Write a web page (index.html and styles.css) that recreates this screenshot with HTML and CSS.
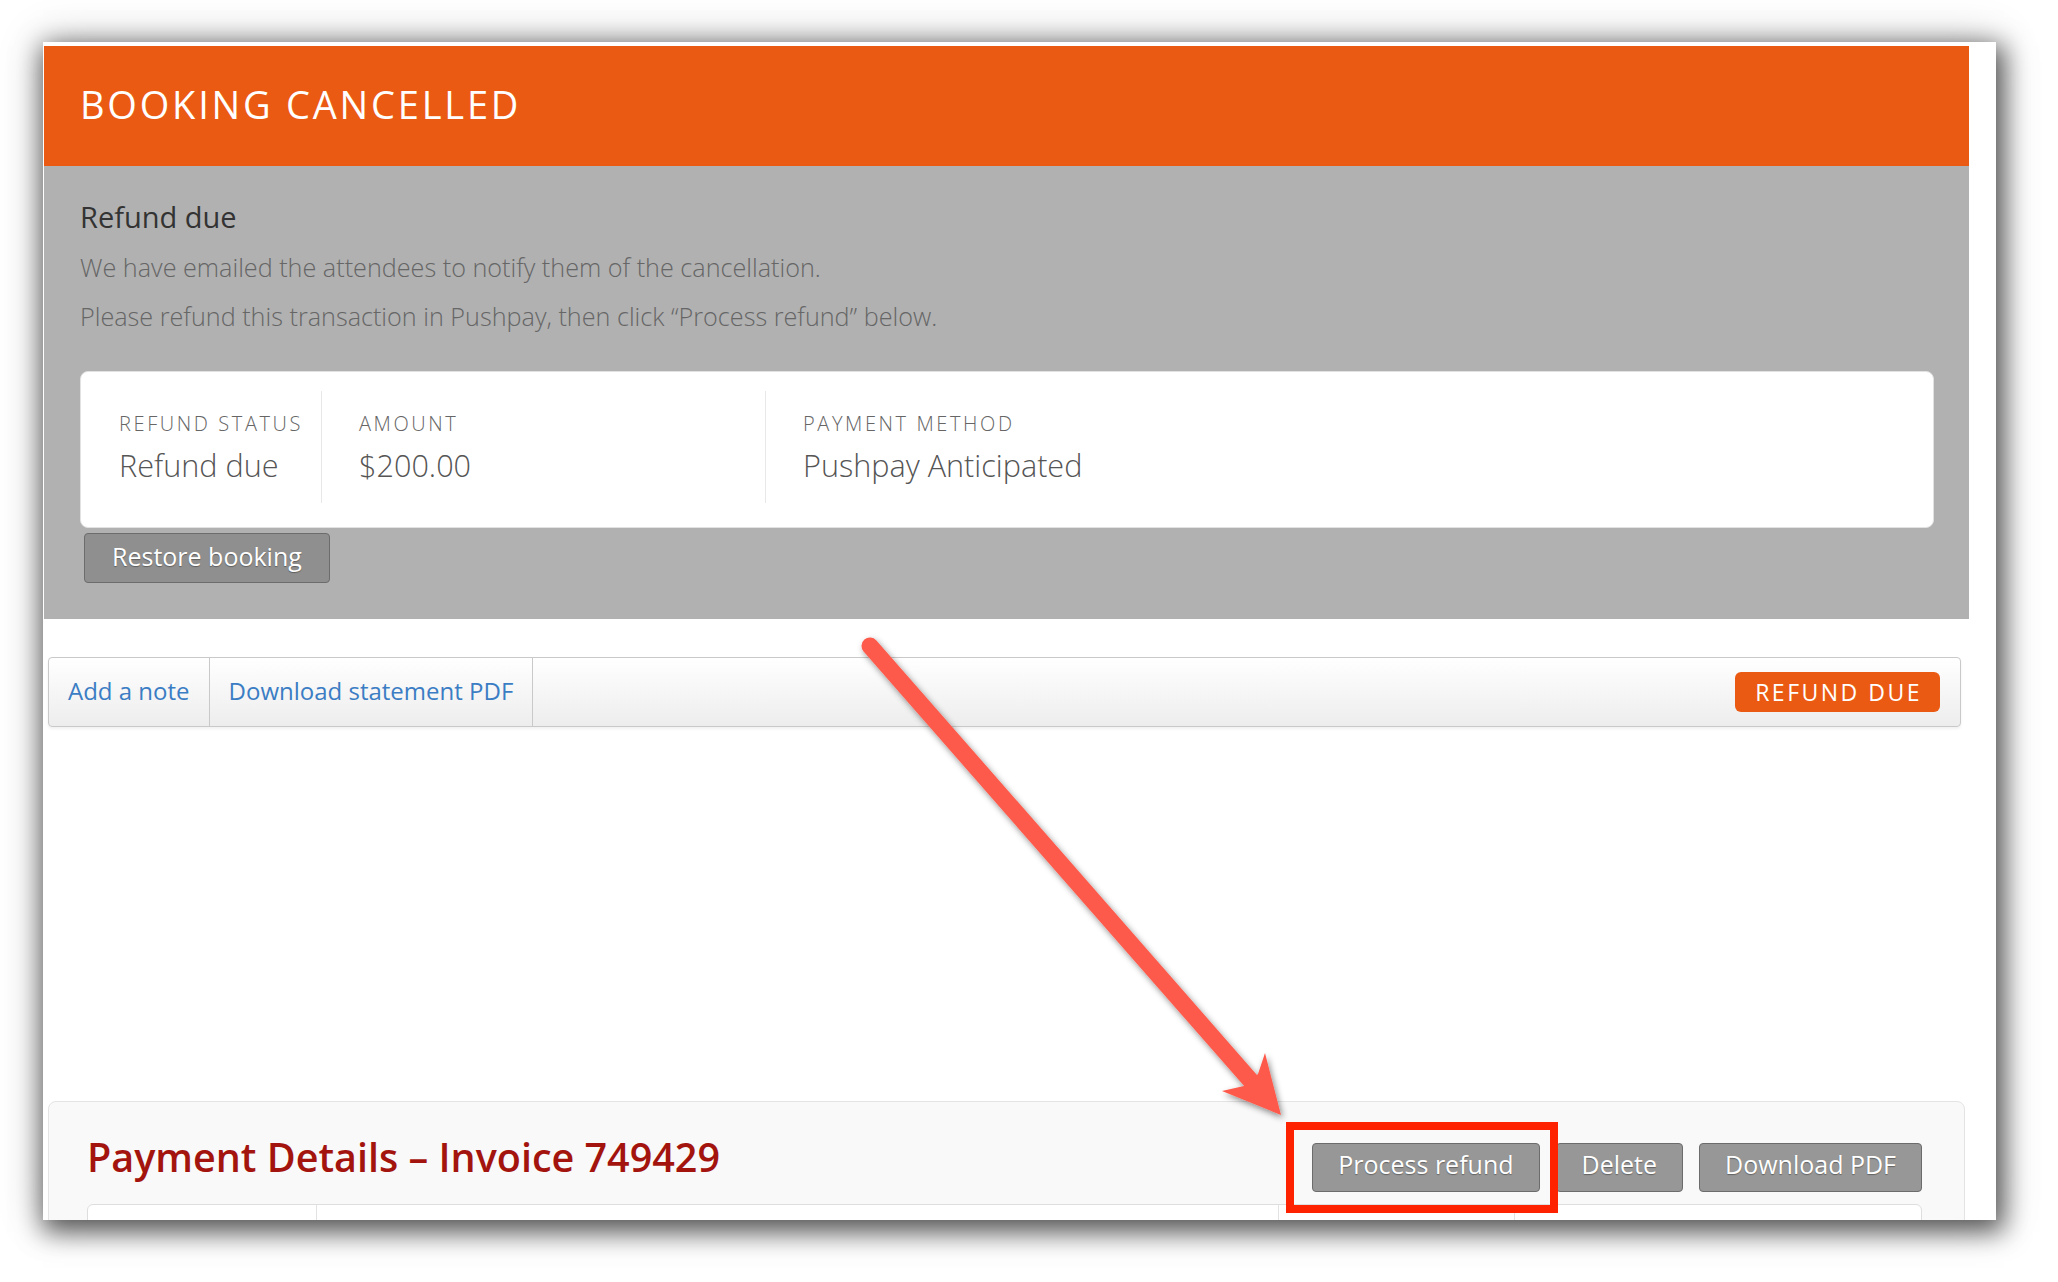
FILE: index.html
```html
<!DOCTYPE html>
<html lang="en">
<head>
<meta charset="UTF-8">
<meta name="viewport" content="width=device-width, initial-scale=1.0">
<title>Booking cancelled</title>
<link rel="stylesheet" href="styles.css">
</head>
<body>
  <div class="window">
    <div class="cancel-banner">
      <div class="banner-title">
        <h1>BOOKING CANCELLED</h1>
      </div>
      <div class="banner-body">
        <h3>Refund due</h3>
        <p>We have emailed the attendees to notify them of the cancellation.</p>
        <p>Please refund this transaction in Pushpay, then click “Process refund” below.</p>
        <div class="refund-card">
          <div class="refund-col col-status">
            <div class="refund-label">REFUND STATUS</div>
            <div class="refund-value">Refund due</div>
          </div>
          <div class="refund-col col-amount">
            <div class="refund-label">AMOUNT</div>
            <div class="refund-value">$200.00</div>
          </div>
          <div class="refund-col col-method">
            <div class="refund-label">PAYMENT METHOD</div>
            <div class="refund-value">Pushpay Anticipated</div>
          </div>
        </div>
        <button class="grey-button restore-button">Restore booking</button>
      </div>
    </div>

    <div class="page-content">
      <div class="toolbar">
        <a href="#" class="toolbar-link">Add a note</a>
        <a href="#" class="toolbar-link">Download statement PDF</a>
        <span class="status-badge">REFUND DUE</span>
      </div>

      <div class="payment-panel">
        <div class="payment-header">
          <h2>Payment Details – Invoice 749429</h2>
          <div class="payment-actions">
            <button class="grey-button">Process refund</button>
            <button class="grey-button">Delete</button>
            <button class="grey-button">Download PDF</button>
          </div>
        </div>
        <table class="payment-table">
          <tr>
            <th class="col-date"></th>
            <th class="col-desc"></th>
            <th class="col-qty"></th>
            <th class="col-total"></th>
          </tr>
        </table>
      </div>
    </div>
  </div>

  <!-- screenshot annotations -->
  <svg class="annotations" width="2058" height="1282" viewBox="0 0 2058 1282">
    <defs>
      <filter id="arrowShadow" x="-20%" y="-20%" width="140%" height="140%">
        <feDropShadow dx="2" dy="3" stdDeviation="3" flood-color="#000" flood-opacity="0.45"/>
      </filter>
    </defs>
    <rect x="1290" y="1126" width="264" height="83" fill="none" stroke="#ff2200" stroke-width="8"/>
    <g filter="url(#arrowShadow)">
      <line x1="870" y1="646" x2="1251" y2="1081" stroke="#fd5a4b" stroke-width="17" stroke-linecap="round"/>
      <polygon points="1281,1115 1222,1091 1244,1086 1258,1074 1265,1053" fill="#fd5a4b"/>
    </g>
  </svg>
</body>
</html>
```

FILE: styles.css
```css
body {
    margin: 0;
    padding: 42px 0 0 43px;
    height: 1282px;
    box-sizing: border-box;
    overflow: hidden;
    position: relative;
    background: #fff;
    font-family: "Open Sans", Arial, sans-serif;
  }
  .window {
    width: 1953px;
    height: 1178px;
    box-sizing: border-box;
    padding: 4px 27px 0 1px;
    background: #fff;
    overflow: hidden;
    box-shadow: 4px 8px 24px 4px rgba(0, 0, 0, 0.6), 0 0 40px rgba(0, 0, 0, 0.25);
  }

  /* orange + grey cancelled block */
  .banner-title {
    background-color: #eb5a13;
    height: 120px;
    box-sizing: border-box;
    padding: 32px 0 0 36px;
  }
  .banner-title h1 {
    margin: 0;
    font-size: 38px;
    line-height: 52px;
    font-weight: 400;
    letter-spacing: 2.8px;
    color: #fff;
  }
  .banner-body {
    background-color: #b1b1b1;
    padding: 32px 35px 36px 36px;
  }
  .banner-body h3 {
    margin: 0;
    font-size: 29px;
    line-height: 38px;
    font-weight: 400;
    color: #333;
  }
  .banner-body p {
    margin: 15px 0 0;
    font-size: 25.2px;
    line-height: 33px;
    font-weight: 300;
    color: #666;
  }
  .banner-body p + p {
    margin-top: 16px;
  }
  .refund-card {
    display: flex;
    margin-top: 38px;
    padding: 19px 0 24px;
    background: #fff;
    border: 1px solid #e2e2e2;
    border-radius: 8px;
  }
  .refund-col {
    box-sizing: border-box;
    padding: 20px 37px 18px;
    border-left: 1px solid #e8e8e8;
    white-space: nowrap;
  }
  .col-status {
    width: 240px;
    padding-left: 38px;
    padding-right: 10px;
    border-left: none;
  }
  .col-amount {
    width: 444px;
  }
  .col-method {
    flex: 1;
  }
  .refund-label {
    font-size: 20px;
    line-height: 26px;
    font-weight: 300;
    letter-spacing: 2.6px;
    color: #666;
  }
  .refund-value {
    margin-top: 8px;
    font-size: 30.6px;
    line-height: 40px;
    font-weight: 300;
    color: #555;
  }

  .grey-button {
    display: block;
    font-family: "Open Sans", Arial, sans-serif;
    font-size: 25px;
    line-height: 33px;
    padding: 4px 25px 10px;
    background-color: #979797;
    color: #fff;
    border: 1px solid #6c6c6c;
    border-radius: 4px;
    text-shadow: 0 1px 1px rgba(0, 0, 0, 0.35);
    cursor: pointer;
  }
  .restore-button {
    margin: 5px 0 0 4px;
    line-height: 34px;
    padding: 5px 27px 9px;
    background-color: #8f8f8f;
  }

  /* page below the banner */
  .page-content {
    padding: 38px 0 0 4px;
  }
  .toolbar {
    display: flex;
    width: 1913px;
    height: 70px;
    box-sizing: border-box;
    border: 1px solid #c9c9c9;
    border-radius: 4px;
    background: linear-gradient(#ffffff, #ededed);
    box-shadow: 0 2px 3px rgba(0, 0, 0, 0.06);
  }
  .toolbar-link {
    display: flex;
    align-items: center;
    padding: 0 19px 4px;
    border-right: 1px solid #c9c9c9;
    font-size: 24px;
    color: #3b7dc4;
    text-decoration: none;
  }
  .status-badge {
    align-self: center;
    margin-left: auto;
    margin-right: 20px;
    padding: 0 18px 0 20px;
    font-size: 23px;
    line-height: 40px;
    letter-spacing: 2.5px;
    color: #fff;
    background-color: #eb5a13;
    border-radius: 6px;
  }

  .payment-panel {
    width: 1917px;
    box-sizing: border-box;
    margin-top: 374px;
    padding: 29px 42px 0 38px;
    background: #f9f9f9;
    border: 1px solid #e4e4e4;
    border-radius: 8px;
  }
  .payment-header {
    display: flex;
    justify-content: space-between;
    align-items: flex-start;
  }
  .payment-header h2 {
    margin: 0;
    font-size: 39.5px;
    line-height: 52px;
    font-weight: 600;
    color: #a3140e;
  }
  .payment-actions {
    display: flex;
    gap: 16px;
    margin-top: 12px;
  }
  .payment-table {
    width: 100%;
    margin-top: 12px;
    border-collapse: separate;
    border-spacing: 0;
    background: #fff;
    border: 1px solid #dedede;
    border-radius: 6px 6px 0 0;
  }
  .payment-table th {
    height: 46px;
    padding: 0;
    border-left: 1px solid #e2e2e2;
  }
  .payment-table th:first-child {
    border-left: none;
  }
  .col-date {
    width: 228px;
  }
  .col-qty {
    width: 235px;
  }
  .col-total {
    width: 406px;
  }

  .annotations {
    position: absolute;
    left: 0;
    top: 0;
    pointer-events: none;
  }
```
